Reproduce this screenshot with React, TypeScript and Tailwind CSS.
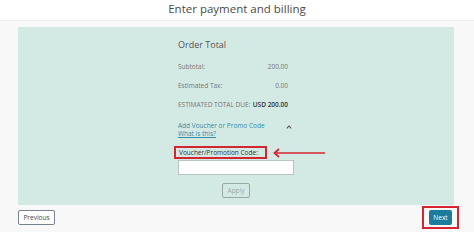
import React from 'react';

const rows = [
  { label: 'Subtotal:', value: '200.00' },
  { label: 'Estimated Tax:', value: '0.00' },
];

export default function App() {
  return (
    <div className="w-[474px] h-[232px] overflow-hidden bg-white font-['Open_Sans',sans-serif]">
      <h1 className="h-[20px] text-center text-[11.5px] leading-[18px] text-[#4a4a4a]">Enter payment and billing</h1>

      <div className="h-[212px] bg-[#f8f8f8] border-t border-[#f4ecec] pl-[18px] pr-[20px] pt-[6px]">
        <div className="h-[178px] bg-[#d3e9e3] flex justify-center">
          <div className="w-[116px] pt-[12px]">
            <div className="text-[9px] leading-[12px] text-[#555]">Order Total</div>

            <div className="w-[110px] mt-[10px] flex flex-col gap-[7px]">
              {rows.map(r => (
                <div key={r.label} className="flex justify-between text-[6.5px] leading-[12px] text-[#777]">
                  <span>{r.label}</span>
                  <span>{r.value}</span>
                </div>
              ))}
              <div className="flex justify-between text-[6.5px] leading-[12px]">
                <span className="text-[#777]">ESTIMATED TOTAL DUE:</span>
                <span className="font-semibold text-[#333]">USD 200.00</span>
              </div>
            </div>

            <div className="mt-[11px] w-[116px] flex justify-between items-start">
              <div className="text-[6.5px] leading-[8px] text-[#3a8ba6] whitespace-nowrap">
                <div>Add Voucher or Promo Code</div>
                <a className="underline">What is this?</a>
              </div>
              <svg width="6" height="4" viewBox="0 0 6 4" className="mt-[3px] mr-[2px]">
                <polyline points="0.8,3.4 3,1 5.2,3.4" fill="none" stroke="#555" strokeWidth="1.1" />
              </svg>
            </div>

            <div className="mt-[8px] flex items-center whitespace-nowrap">
              <div className="-ml-[4px] shrink-0 w-[93px] h-[13px] border-2 border-[#d52530] flex items-center pl-[3px] text-[6.5px] text-[#333]">
                Voucher/Promotion Code:
              </div>
              <svg width="52" height="10" viewBox="0 0 52 10" className="shrink-0 ml-[6px]">
                <line x1="2" y1="5" x2="52" y2="5" stroke="#d52530" strokeWidth="1.6" />
                <polyline points="6,1 1.5,5 6,9" fill="none" stroke="#d52530" strokeWidth="1.8" />
              </svg>
            </div>

            <input className="block mt-[1px] w-[116px] h-[15px] bg-white border border-[#b8c4c4] outline-none" />

            <div className="mt-[8px] flex justify-center">
              <button className="w-[28px] h-[15px] border border-[#9aa7a7] rounded-[2px] text-[6.5px] text-[#9aa] bg-transparent">
                Apply
              </button>
            </div>
          </div>
        </div>

        <div className="mt-[1px] flex justify-between items-center h-[23px]">
          <button className="w-[37px] h-[15px] border border-[#77838f] rounded-[2px] bg-white text-[6.5px] text-[#444]">
            Previous
          </button>
          <div className="-mr-[5px] border-2 border-[#d52530] px-[5px] py-[2px]">
            <button className="block w-[23px] h-[15px] rounded-[2px] bg-[#1b7c9c] text-[6.5px] text-white">
              Next
            </button>
          </div>
        </div>
      </div>
    </div>
  );
}
